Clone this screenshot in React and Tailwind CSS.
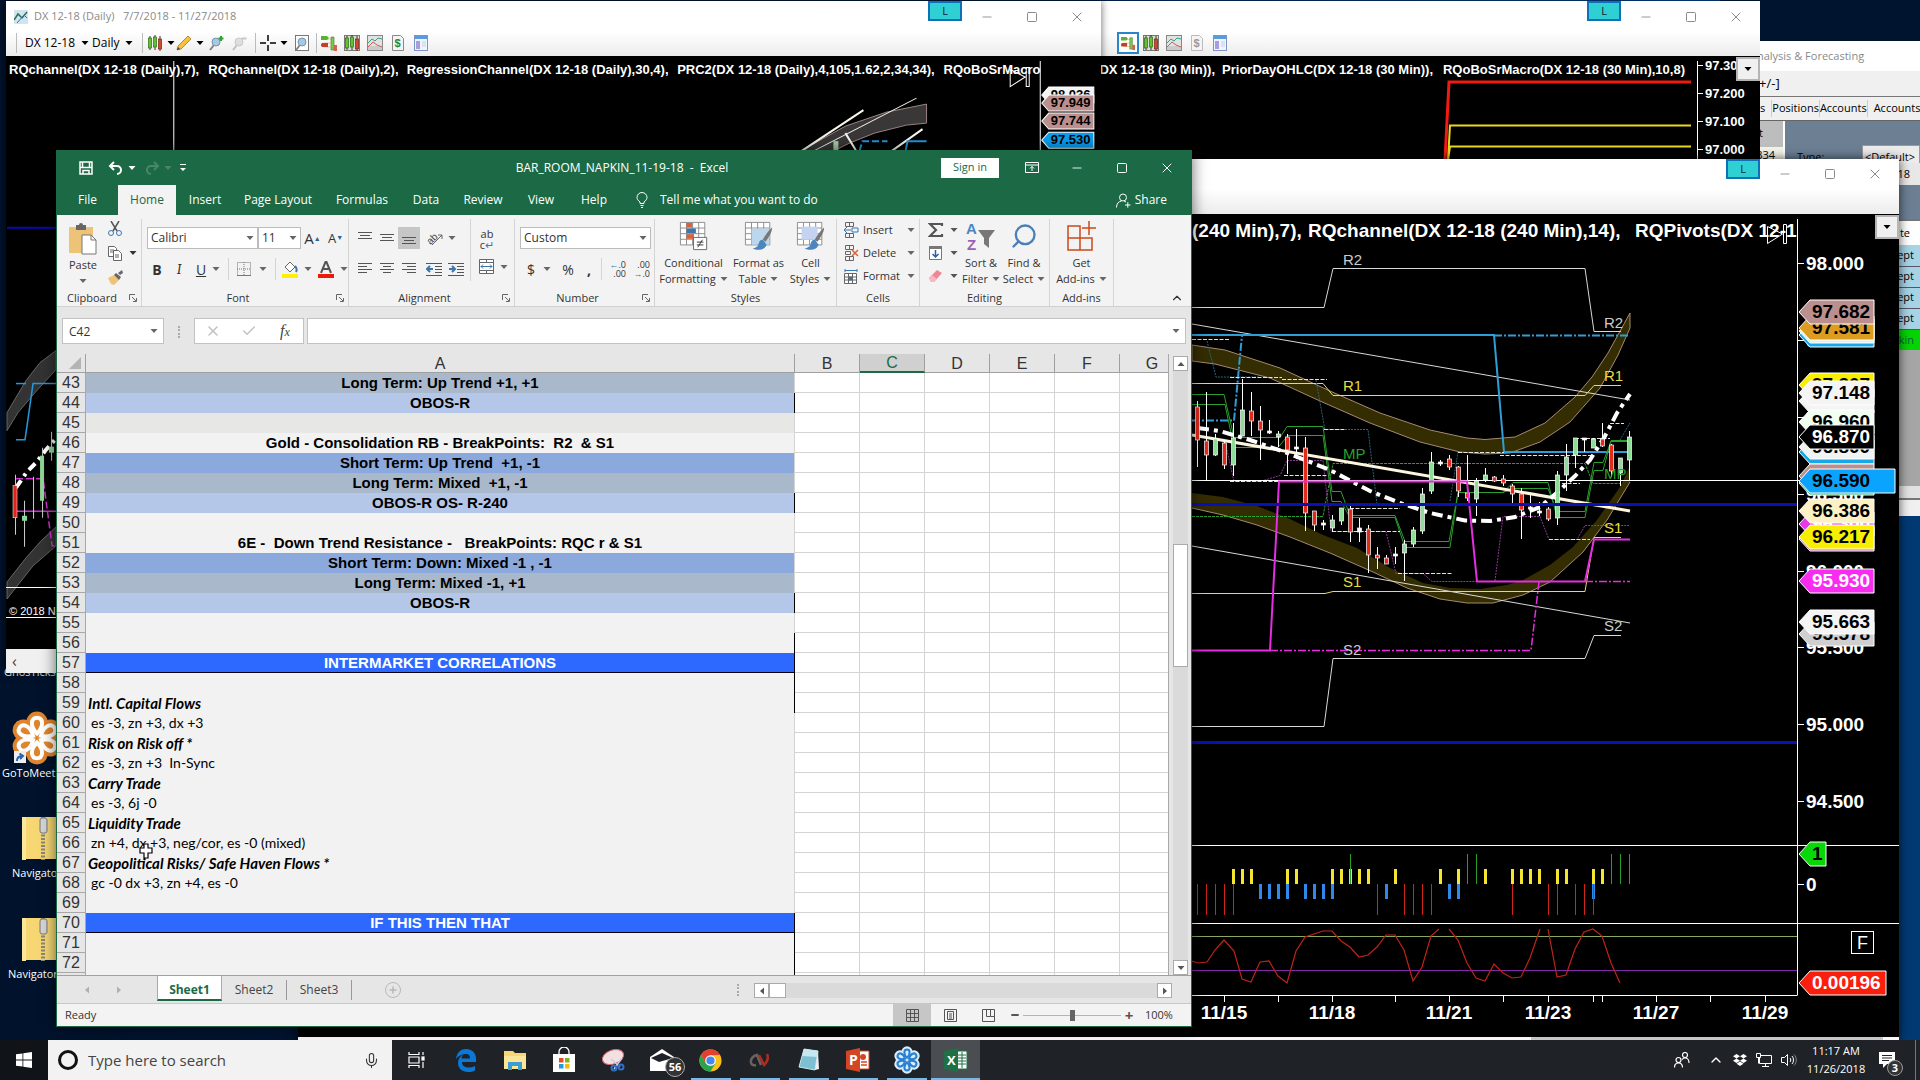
import React from "react";
import { Minus, Square, X, Mic, ChevronUp, Check, Search } from "lucide-react";
import { SiDropbox } from "react-icons/si";

const poly = (pts) => pts.map((p) => p.join(",")).join(" ");

/* ---------- shared window pieces ---------- */

function Caret({ className = "" }) {
  return (
    <svg viewBox="0 0 8 4" className={"h-1 w-2 shrink-0 " + className} fill="currentColor">
      <path d="M0.5 0h7L4 4z" />
    </svg>
  );
}

function Controls({ link }) {
  return (
    <div className="flex h-full items-center pr-0.5">
      {link && (
        <button className="mr-0.5 h-5 w-[34px] self-start border-2 border-[#0f6fb8] bg-[#2fd0d4] text-[11px] leading-4 text-[#123]">L</button>
      )}
      <button aria-label="Minimize" className="flex w-[45px] justify-center"><Minus className="size-3.5" strokeWidth={1.5} /></button>
      <button aria-label="Maximize" className="flex w-[45px] justify-center"><Square className="size-3" strokeWidth={2} /></button>
      <button aria-label="Close" className="flex w-[45px] justify-center"><X className="size-4" strokeWidth={1.5} /></button>
    </div>
  );
}

function Tag({ x = 1799, y, w = 75, h = 24, fill, text, color = "#000", size = 19, stroke = "#fff" }) {
  const n = h / 2 - 1;
  return (
    <g>
      <polygon points={poly([[x, y], [x + n, y - h / 2], [x + w, y - h / 2], [x + w, y + h / 2], [x + n, y + h / 2]])} fill={fill} stroke={stroke} strokeWidth="1" />
      <text x={x + (size > 15 ? 13 : 9)} y={y + Math.round(size * 0.33)} fontSize={size} fontWeight="700" fill={color}>{text}</text>
    </g>
  );
}

function StepEnd({ x, y }) {
  return (
    <g fill="none" stroke="#fff" strokeWidth="1" transform={`translate(${x} ${y})`}>
      <path d="M0.5 2.5v17l15-9.5zM16.5 0.5h3v19h-3z" />
    </g>
  );
}

/* ---------- chart toolbar icons ---------- */

function BoardIcon({ boxed }) {
  return (
    <svg viewBox="0 0 16 16" className={boxed ? "size-[22px] border-2 border-[#2a86c8] bg-white p-0.5" : "size-4"}>
      <path d="M3 4h10M3 8h10M3 12h10" stroke="#e5c9a0" />
      <path d="M0 1h6l2 2-2 2H0z" fill="#57b332" />
      <path d="M1 8h6v4H1l-1.500-2z" fill="#c2402a" />
      <path d="M10 2h3v13h-3z" fill="#7ec850" stroke="#3f7a22" strokeWidth=".6" />
      <path d="M13 10h3v6h-3z" fill="#d2634a" />
    </svg>
  );
}
function CandlesIcon({ framed }) {
  return (
    <svg viewBox="0 0 16 16" className="size-4 shrink-0">
      {framed && <rect x=".5" y=".5" width="15" height="15" fill="#ddd" stroke="#777" />}
      <path d="M3 1v14M8 0v15M13 1v15" stroke="#333" />
      <rect x="1.500" y="3" width="3" height="10" fill="#62c232" stroke="#2c6a12" strokeWidth=".7" />
      <rect x="6.500" y="2" width="3" height="10" fill="#62c232" stroke="#2c6a12" strokeWidth=".7" />
      <rect x="11.500" y="4" width="3" height="10" fill="#cc4a30" stroke="#7e1f10" strokeWidth=".7" />
    </svg>
  );
}
function LinesIcon() {
  return (
    <svg viewBox="0 0 16 16" className="size-4">
      <rect x=".5" y=".5" width="15" height="15" fill="#dfe3e4" stroke="#888" />
      <path d="M1 11h14v4H1z" fill="#c9cccd" />
      <path d="M1 8l4-4 3 2 3-3 4 1" fill="none" stroke="#3c9b80" />
      <path d="M1 12l5-5 4 3 5 2" fill="none" stroke="#d45b50" />
    </svg>
  );
}
function DollarIcon({ dim }) {
  return (
    <svg viewBox="0 0 16 16" className="size-4">
      <path d="M2.500.5h8l3 3v12h-11z" fill="#f4f4f4" stroke={dim ? "#bbb" : "#888"} />
      <text x="4.500" y="12" fontSize="11" fontWeight="700" fill={dim ? "#999" : "#208a30"}>$</text>
    </svg>
  );
}
function SheetIcon() {
  return (
    <svg viewBox="0 0 16 16" className="size-4">
      <rect x="1.500" y=".5" width="13" height="15" fill="#f0f4ff" stroke="#7c94c4" />
      <path d="M2 1h12v3H2z" fill="#5a9be0" />
      <path d="M3 6h4v8H3z" fill="#a99be0" />
      <path d="M9 7h4M9 9h4M9 11h4" stroke="#c8cfe0" />
    </svg>
  );
}
function LensIcon({ kind }) {
  return (
    <svg viewBox="0 0 16 16" className={"size-4 " + (kind === "minus" ? "opacity-45 grayscale" : "")}>
      {kind === "page" && <rect x="1.500" y=".5" width="13" height="15" fill="#fff" stroke="#777" />}
      <path d="M2 15l4-5" stroke="#8a7f78" strokeWidth="2" />
      <circle cx="8" cy="7" r="4" fill="#a9c7e0" stroke="#7395b4" />
      {kind === "plus" && <path d="M10.500 3.500h5M13 1v5" stroke="#2fa22f" strokeWidth="2" />}
      {kind === "minus" && <path d="M10.500 3.500h5" stroke="#888" strokeWidth="2" />}
    </svg>
  );
}

/* ---------- daily chart window ---------- */

function DailyWindow() {
  return (
    <section className="absolute left-1.5 top-px flex h-[672px] w-[1095px] flex-col bg-white text-[#8a8a8a] shadow-[0_0_8px_rgba(0,0,0,.6)]">
      <header className="flex h-[31px] items-center justify-between bg-white">
        <div className="flex items-center gap-1.5 pl-2 text-[12px]">
          <svg viewBox="0 0 14 14" className="size-3.5">
            <rect width="14" height="14" fill="#cfe6ee" />
            <path d="M0 10l4-6 4 4 5-6" fill="none" stroke="#2a6f55" strokeWidth="1.500" />
            <path d="M3 13l7-8 3 3" fill="none" stroke="#3a6fc0" />
          </svg>
          <h1 className="whitespace-pre text-[11px]">DX 12-18 (Daily)   7/7/2018 - 11/27/2018</h1>
        </div>
        <Controls link />
      </header>
      <div className="flex h-6 items-center bg-gradient-to-b from-white to-[#ececec] pb-0.5 pl-2.5 text-black">
        <span className="mr-2 h-5 border-r border-[#bbb]" />
        <button className="flex w-[67px] items-center gap-1.5 whitespace-nowrap text-[12px]">DX 12-18 <Caret className="w-1.5" /></button>
        <button className="mr-2 flex w-[42px] items-center gap-1.5 text-[12px]">Daily <Caret className="w-1.5" /></button>
        <span className="mr-1 h-5 border-r border-[#bbb]" />
        <button aria-label="Chart style" className="flex w-[29px] items-center gap-1"><CandlesIcon /><Caret className="w-1.5" /></button>
        <button aria-label="Draw" className="mr-1.5 flex w-[26px] items-center gap-1">
          <svg viewBox="0 0 16 16" className="size-4 shrink-0"><path d="M1 15l1-4L12 1l3 3L5 14z" fill="#f4c23c" stroke="#a87716" strokeWidth=".8" /><path d="M1 15l1-3 2 2z" fill="#444" /></svg>
          <Caret className="w-1.5 shrink-0" />
        </button>
        <button aria-label="Zoom in" className="w-[23px]"><LensIcon kind="plus" /></button>
        <button aria-label="Zoom out" className="w-[24px]"><LensIcon kind="minus" /></button>
        <span className="mr-1 h-5 border-r border-[#bbb]" />
        <button aria-label="Crosshair" className="mr-2 flex w-[26px] items-center gap-1">
          <svg viewBox="0 0 16 16" className="size-4 shrink-0"><path d="M8 0v6M8 10v6M0 8h6M10 8h6" stroke="#000" strokeWidth="1.500" /></svg>
          <Caret className="w-1.5 shrink-0" />
        </button>
        <button aria-label="Inspect" className="w-[22px]"><LensIcon kind="page" /></button>
        <span className="mr-1 h-5 border-r border-[#bbb]" />
        <div className="flex gap-[7px]">
          <button aria-label="Trader"><BoardIcon /></button>
          <button aria-label="Bars"><CandlesIcon framed /></button>
          <button aria-label="Indicators"><LinesIcon /></button>
          <button aria-label="Strategies"><DollarIcon /></button>
          <button aria-label="Properties"><SheetIcon /></button>
        </div>
      </div>
      <svg viewBox="6 56 1095 592" className="min-h-0 w-full flex-1 bg-black" preserveAspectRatio="xMinYMin slice">
        <g fill="#fff" fontSize="13" fontWeight="700">
          <text x="9" y="74">RQchannel(DX 12-18 (Daily),7),</text>
          <text x="208" y="74">RQchannel(DX 12-18 (Daily),2),</text>
          <text x="406" y="74">RegressionChannel(DX 12-18 (Daily),30,4),</text>
          <text x="676" y="74">PRC2(DX 12-18 (Daily),4,105,1.62,2,34,34),</text>
          <text x="942" y="74">RQoBoSrMacro</text>
        </g>
        <path d="M173.500 61v90" stroke="#fff" />
        <path d="M7 227.500h50" stroke="#0808b8" strokeWidth="2" />
        <path d="M56 350L40 362 26 380 7 412V430L18 412 35 392 56 369zM56 526L41 540 26 557 7 581V598L33 565 56 545z" fill="#333" stroke="#777" strokeWidth=".8" />
        <g fill="none" stroke="#2299dd" strokeWidth="1.500">
          <path d="M16 383h10" />
          <path d="M16 439h9l8-56h23" />
        </g>
        <path d="M16 487l11-16 10-10 9-12 10-11" fill="none" stroke="#fff" strokeWidth="4" strokeDasharray="9 5 3 5" />
        <path d="M16 478h27l9 67h4" fill="none" stroke="#d030d0" strokeWidth="1.500" strokeDasharray="7 3" />
        <path d="M16 510.500h40" stroke="#d030d0" strokeWidth="1.500" />
        <path d="M15.500 474v60M24.500 500v46M33.500 476v42M42.500 447v70M51.500 431v29" stroke="#ccc" />
        <rect x="13" y="485" width="4" height="32" fill="#e02418" stroke="#fff" strokeWidth=".5" />
        <rect x="22" y="515" width="5" height="5" fill="#8fd694" />
        <rect x="40" y="455" width="4" height="45" fill="#8fd694" />
        <rect x="49" y="446" width="5" height="6" fill="#8fd694" />
        <path d="M6 586.500h50M6 616.500h50" stroke="#fff" />
        <text x="9" y="614" fontSize="11" fill="#fff">© 2018 NinjaTrader</text>
        <path d="M799 151L844 126 885 112 925 104V123L905 125 873 133 848 143 832 151z" fill="#3a3739" stroke="#b79a9a" strokeWidth=".8" />
        <g stroke="#f8f8ea" strokeWidth="2" fill="none">
          <path d="M800 151l62-41M844 133l11 18M890 151l31-22" />
          <path d="M812 151L915 98" strokeWidth="1" />
        </g>
        <path d="M858 151l3-10h25" fill="none" stroke="#2299dd" strokeWidth="2" strokeDasharray="7 3" />
        <path d="M904 151l2-10h19" fill="none" stroke="#2299dd" strokeWidth="2" />
        <rect x="832" y="141" width="5" height="10" fill="#a9cfa9" />
        <path d="M1038.500 61v90" stroke="#fff" />
        <Tag x={1040} y={95} w={52} h={16} size={13} fill="#f4f4f4" text="98.036" />
        <Tag x={1040} y={103} w={52} h={16} size={13} fill="#bc8f8f" text="97.949" />
        <Tag x={1040} y={121} w={52} h={16} size={13} fill="#bc8f8f" text="97.744" />
        <Tag x={1040} y={140} w={52} h={16} size={13} fill="#0a9ff0" text="97.530" />
        <StepEnd x={1008} y={67} />
      </svg>
      <footer className="flex h-6 items-center bg-[#f0f0f0] pl-1.5">
        <button aria-label="Scroll left" className="text-[16px] leading-none text-[#444]">‹</button>
      </footer>
    </section>
  );
}

/* ---------- 30 minute chart window ---------- */

function HalfHourWindow() {
  return (
    <section className="absolute left-[1000px] top-px flex h-[400px] w-[760px] flex-col bg-white text-[#8a8a8a]">
      <header className="flex h-[31px] items-center justify-end"><Controls link /></header>
      <div className="flex h-6 items-center gap-[7px] bg-gradient-to-b from-white to-[#ececec] pb-0.5 pl-[117px]">
        <button aria-label="Trader" className="-mr-[3px]"><BoardIcon boxed /></button>
        <button aria-label="Bars"><CandlesIcon framed /></button>
        <button aria-label="Indicators"><LinesIcon /></button>
        <button aria-label="Strategies"><DollarIcon dim /></button>
        <button aria-label="Properties"><SheetIcon /></button>
      </div>
      <div className="relative flex flex-1 bg-black">
        <svg viewBox="1000 56 760 345" className="w-full flex-1" preserveAspectRatio="xMinYMin slice">
          <g fill="#fff" fontSize="13" fontWeight="700" textAnchor="end">
            <text x="1215" y="74">(DX 12-18 (30 Min)),</text>
            <text x="1433" y="74">PriorDayOHLC(DX 12-18 (30 Min)),</text>
            <text x="1685" y="74">RQoBoSrMacro(DX 12-18 (30 Min),10,8)</text>
          </g>
          <path d="M1445 160l4-78h242" fill="none" stroke="#f01c10" strokeWidth="3" />
          <path d="M1448 160l2-34.500h241M1448 160l2-13.500h241" fill="none" stroke="#e8d820" strokeWidth="2" />
          <path d="M1697.500 61v99M1698 65.500h5M1698 93.500h5M1698 121.500h5M1698 149.500h5" stroke="#fff" />
          <g fill="#fff" fontSize="13" fontWeight="700">
            <text x="1705" y="70">97.300</text>
            <text x="1705" y="98">97.200</text>
            <text x="1705" y="126">97.100</text>
            <text x="1705" y="154">97.000</text>
          </g>
        </svg>
        <button aria-label="Price scale" className="absolute right-0 top-px flex h-6 w-6 items-center justify-center border-2 border-[#b5b5b5] bg-[#f0f0f0] text-black"><Caret /></button>
      </div>
    </section>
  );
}

/* ---------- control center window ---------- */

function ControlCenter() {
  const rows = ["ept", "ept", "ept", "ept"];
  return (
    <section className="absolute left-[1740px] right-0 top-[41px] flex h-[475px] flex-col overflow-hidden bg-[#f0f0f0] text-[11px] text-black">
      <header className="flex h-[30px] items-center bg-white pl-2.5 whitespace-nowrap text-[#8a8a8a]">Analysis &amp; Forecasting</header>
      <div className="flex h-[26px] items-center border-b border-[#777] pl-[19px] text-[13px]">+/-]</div>
      <nav className="flex h-[23px] items-center whitespace-nowrap">
        <button className="w-10 border-r border-[#ccc] pr-1.5 text-right">tions</button>
        <button className="w-[53px] border-r border-[#ccc]">Positions</button>
        <button className="w-[57px] border-r border-[#ccc]">Accounts</button>
        <button className="pl-1.5">Accounts</button>
      </nav>
      <div className="flex h-[43px] border-t border-[#666]">
        <div className="flex w-[45px] flex-col border-r-2 border-white text-right">
          <div className="h-[26px] bg-[#bdbdbd] pr-5 leading-6">t</div>
          <div className="flex-1 bg-[#f4f4ea] pr-2 leading-4">334</div>
        </div>
        <div className="flex flex-1 items-start bg-[#6c7f93] pt-6">
          <label htmlFor="template" className="w-[77px] pl-3 pt-1">Type:</label>
          <select id="template" className="h-6 flex-1 appearance-none border border-[#999] bg-[#ececec] px-0.5"><option>&lt;Default&gt;</option></select>
        </div>
      </div>
      <div className="flex h-[22px] items-center justify-end bg-[#e8e8e8] pr-2.5">18</div>
      <div className="h-9 border-b-2 border-[#777] bg-[#6c7f93]" />
      <table className="w-full text-right">
        <thead><tr className="h-6 bg-white"><th className="pr-2.5 font-normal">te</th></tr></thead>
        <tbody>
          {rows.map((r, i) => <tr key={i} className="h-[21px] border-b border-[#556] bg-[#a6d3e6]"><td className="pr-1.5">{r}</td></tr>)}
          <tr className="h-[21px] bg-[#04d404] text-[#063]"><td className="pr-1.5">kin</td></tr>
        </tbody>
      </table>
      <div className="flex-1 bg-[#a6a6a6]" />
      <div className="h-3.5 border-b-2 border-[#777] bg-[#e2e2e2]" />
      <div className="h-4 bg-[#f0f0f0]" />
    </section>
  );
}

/* ---------- 240 minute chart window ---------- */

// x, high, low, body top, body bottom, kind
const candles = [
  [1197, 401, 467, 407, 440, "r"], [1206, 392, 481, 441, 455, "r"], [1215, 434, 456, 439, 455, "g"], [1224, 440, 469, 443, 465, "r"],
  [1233, 423, 476, 438, 465, "g"], [1242, 379, 436, 410, 436, "g"], [1251, 392, 436, 411, 421, "r"], [1260, 406, 460, 421, 430, "r"],
  [1269, 420, 434, 431, 433, "w"], [1278, 431, 447, 434, 437, "g"], [1287, 434, 474, 437, 450, "r"], [1296, 429, 459, 447, 449, "w"],
  [1305, 437, 531, 448, 513, "r"], [1314, 511, 531, 511, 525, "r"], [1323, 520, 530, 523, 525, "w"], [1332, 515, 532, 520, 528, "g"],
  [1341, 508, 525, 508, 521, "g"], [1350, 505, 542, 509, 532, "r"], [1359, 518, 542, 528, 532, "w"], [1368, 525, 573, 529, 555, "r"],
  [1377, 547, 569, 555, 558, "r"], [1386, 555, 564, 558, 564, "r"], [1395, 547, 564, 554, 556, "w"], [1404, 540, 581, 544, 553, "g"],
  [1413, 527, 547, 530, 544, "g"], [1422, 488, 534, 494, 531, "g"], [1431, 452, 494, 462, 491, "g"], [1440, 460, 466, 462, 464, "w"],
  [1449, 455, 470, 459, 467, "r"], [1458, 466, 497, 467, 491, "r"], [1467, 455, 501, 493, 498, "r"], [1476, 478, 516, 481, 499, "g"],
  [1485, 468, 482, 475, 480, "g"], [1494, 476, 482, 477, 481, "r"], [1503, 475, 486, 479, 483, "r"], [1512, 484, 503, 486, 494, "r"],
  [1521, 488, 539, 494, 510, "r"], [1530, 495, 518, 507, 509, "w"], [1539, 502, 516, 511, 513, "w"], [1548, 507, 521, 509, 519, "r"],
  [1557, 471, 525, 475, 518, "g"], [1566, 444, 491, 457, 475, "g"], [1575, 438, 468, 438, 455, "g"], [1584, 438, 452, 438, 440, "w"],
  [1593, 438, 448, 439, 448, "g"], [1602, 423, 447, 439, 446, "r"], [1611, 444, 477, 445, 471, "r"], [1620, 458, 486, 458, 473, "g"],
  [1629, 431, 480, 437, 460, "g"],
];
const bodyFill = { r: "#e42a1c", g: "#8fdc98", w: "#ffffff" };

const yellowBars = [4, 5, 6, 10, 11, 15, 16, 17, 18, 19, 22, 27, 29, 32, 35, 36, 37, 38, 40, 41, 44, 45];
const blueBars = [7, 8, 9, 10, 12, 13, 14, 15, 21, 28, 29, 44];
const redBars = [0, 1, 2, 3, 4, 20, 23, 24, 25, 26, 35, 39, 40, 42, 43, 44];
const greenBars = [17, 30, 31, 46, 47, 48];
const barX = (k) => 1197 + 9 * k;

const oscillator = [
  [[1192, 961], [1198, 963], [1207, 962], [1215, 950], [1224, 940], [1234, 951], [1242, 979], [1251, 982], [1260, 962], [1269, 961], [1278, 976], [1287, 983], [1296, 951], [1305, 937], [1314, 934], [1323, 931], [1332, 931], [1341, 941], [1350, 947], [1359, 957], [1368, 955], [1377, 947], [1386, 935], [1395, 935], [1404, 950], [1413, 981], [1422, 967], [1431, 936], [1439, 929]],
  [[1449, 929], [1458, 940], [1467, 963], [1476, 978], [1485, 981], [1494, 964], [1503, 973], [1512, 978], [1521, 977], [1530, 958], [1540, 929]],
  [[1548, 929], [1557, 977], [1566, 975], [1575, 949], [1584, 932], [1593, 929], [1602, 936], [1611, 963], [1620, 983]],
];

const axis = [["98.000", 263], ["97.500", 340], ["97.000", 417], ["96.500", 494], ["96.000", 571], ["95.500", 647], ["95.000", 724], ["94.500", 801]];
const dates = [["11/15", 1224], ["11/18", 1332], ["11/21", 1449], ["11/23", 1548], ["11/27", 1656], ["11/29", 1765]];
const dateTicks = [1224, 1278, 1332, 1395, 1449, 1503, 1548, 1593, 1602, 1656, 1710, 1765];

function FourHourWindow() {
  return (
    <section className="absolute bottom-0 left-[298px] top-[159px] flex w-[1601px] flex-col bg-white text-[#8a8a8a] shadow-[0_0_10px_rgba(0,0,0,.7)]">
      <header className="flex h-[30px] items-center justify-end"><Controls link /></header>
      <div className="h-[25px] bg-gradient-to-b from-white to-[#ececec]" />
      <div className="relative flex min-h-0 flex-1 justify-end overflow-hidden bg-black">
        <svg viewBox="1192 214 707 823" width="707" height="823" className="shrink-0">
          <g fill="#fff" fontSize="19" fontWeight="700">
            <text x="1192" y="237">(240 Min),7),</text>
            <text x="1308" y="237">RQchannel(DX 12-18 (240 Min),14),</text>
            <text x="1635" y="237">RQPivots(DX 12-1</text>
          </g>
          <StepEnd x={1767} y={224} />
          <g fill="#342d02" stroke="#a58a70" strokeWidth="1">
            <path d="M1192 345L1225 350 1280 368 1330 391 1380 413 1430 430 1467 438 1485 439.500 1515 437 1545 423 1575 397 1592 377 1608 353 1630 313V328L1618 355 1600 388 1570 422 1540 442 1510 453 1485 454 1460 452 1420 442 1370 423 1320 401 1270 378 1215 364 1192 361z" />
            <path stroke="none" d="M1192 493L1223 497 1257 506 1290 519 1323 535 1357 548 1390 568 1423 583 1450 588 1480 589 1507 585 1523 580 1550 565 1573 547 1597 520 1620 487 1630 466V482L1607 520 1583 552 1550 582 1523 595 1493 603 1467 603 1440 599 1407 588 1373 572 1330 553 1290 537 1257 525 1223 515 1192 508z" />
            <path fill="none" d="M1192 508L1223 515 1257 525 1290 537 1330 553 1373 572 1407 588 1440 599 1467 603 1493 603 1523 595 1550 582 1583 552 1607 520 1630 482" />
          </g>
          <g fill="none" stroke="#d8d8d8">
            <path d="M1192 307.500H1324L1333 268.500H1585L1594 331.500H1621" />
            <path d="M1192 726.500H1324L1333 658.500H1585L1594 635.500H1621" />
            <path d="M1192 324L1630 400M1192 546L1630 623" />
          </g>
          <g fill="none" stroke="#e8dc60">
            <path d="M1192 383.500H1323L1333 395.500H1585L1594 385.500H1621" />
            <path d="M1192 593.500H1325L1333 591.500H1585L1594 537.500H1621" />
          </g>
          <g fill="none" stroke="#2f9ed8" strokeWidth="2">
            <path d="M1192 335H1494L1504 452H1630" />
            <path d="M1494 335.500H1630M1192 420.500H1234L1242 335" strokeDasharray="8 2 2 2" />
          </g>
          <g fill="none" stroke="#2a6478" strokeDasharray="2 1">
            <path d="M1207 341L1216 377H1260M1316 380L1325 430M1324 429.500H1368L1377 504M1450 501L1458 452M1620 440L1630 423" />
          </g>
          <g fill="none" stroke="#2aa02e">
            <path d="M1192 394.500H1224L1234 437.500H1280L1287 426.500H1323L1332 491.500H1341L1350 515.500H1395L1405 541.500H1449L1458 492.500H1503L1513 482.500H1548L1557 517.500H1585L1594 470.500H1603L1611 440.500H1630" />
            <path d="M1192 404.500H1225L1234 447.500H1278L1288 435.500H1323L1332 501.500H1341L1350 517.500H1395L1405 547.500H1450L1458 492.500H1503L1513 488.500H1548L1557 511.500H1585L1594 462.500H1603L1611 441.500H1630" />
            <path d="M1192 516.500H1323L1333 463.500H1585L1593 483.500H1621" strokeDasharray="3 1" />
          </g>
          <g fill="none" stroke="#8c3a94" strokeDasharray="2 1">
            <path d="M1225 441L1234 481.500H1260L1280 475.500L1287 460.500H1323L1331 531.500H1386L1396 573.500H1423L1432 581.500H1480" />
            <path d="M1495 581L1503 516.500H1540L1549 539.500H1577L1585 525.500H1630" />
          </g>
          <path d="M1192 339.500H1230M1230 377.500H1282M1282 379.500H1327M1284 475.500H1328M1230 481.500H1280M1350 508.500H1400M1332 531.500H1400M1398 573.500H1453M1324 429.500H1345M1458 452.500H1504M1500 455.500H1594M1610 423.500H1624M1549 539.500H1590M1562 483.500H1580M1575 438.500H1610" fill="none" stroke="#e4e4e4" strokeDasharray="4 1.500" />
          <path d="M1192 435L1630 511" stroke="#fdf6dc" strokeWidth="3" />
          <path d="M1198 428L1220 431 1250 440 1290 454 1330 470 1370 491 1400 503 1430 513 1465 520.500 1490 521 1515 517 1540 507 1560 490 1575 476 1590 460 1605 436 1617 413 1630 394" fill="none" stroke="#fff" strokeWidth="4" strokeDasharray="11 5 4 5" />
          <path d="M1192 480.500H1800" stroke="#fff" />
          {candles.map(([x, hi, lo, t, b, k]) => (
            <g key={x}>
              <path d={`M${x + 0.5} ${hi}V${lo}`} stroke="#fff" />
              <rect x={x - 1.5} y={t} width="4" height={b - t} fill={bodyFill[k]} stroke="#fff" strokeWidth=".7" />
            </g>
          ))}
          <g fill="none" stroke="#e62ee0" strokeWidth="2">
            <path d="M1192 650.500H1270L1279 481.500H1467L1477 581.500H1585L1594 539.500H1630" />
            <path d="M1270 650.500H1531L1539 581.500M1585 581.500H1630" strokeDasharray="8 2 2 2" strokeWidth="1.500" />
          </g>
          <path d="M1192 504.500H1797M1192 742.500H1797" stroke="#0a10b8" strokeWidth="3" />
          <g fontSize="15">
            <g fill="#ccc"><text x="1343" y="265">R2</text><text x="1604" y="328">R2</text><text x="1343" y="655">S2</text><text x="1604" y="631">S2</text></g>
            <g fill="#e8dc40"><text x="1343" y="391">R1</text><text x="1604" y="381">R1</text><text x="1343" y="587">S1</text><text x="1604" y="533">S1</text></g>
            <g fill="#2aa02e"><text x="1343" y="459">MP</text><text x="1604" y="479">MP</text></g>
          </g>

          {yellowBars.map((k) => <rect key={"y" + k} x={barX(k) - 1} y="869" width="3" height="15" fill="#f4e62c" />)}
          {blueBars.map((k) => <rect key={"b" + k} x={barX(k) - 1} y="884" width="3" height="15" fill="#3088e8" />)}
          {redBars.map((k) => <rect key={"r" + k} x={barX(k)} y="884" width="1" height="31" fill="#d02416" />)}
          {greenBars.map((k) => <rect key={"g" + k} x={barX(k)} y="854" width="1" height="30" fill="#28a028" />)}
          <path d="M1192 936.500H1797" stroke="#8aa860" />
          <path d="M1192 970.500H1797" stroke="#8028a8" />
          {oscillator.map((p, i) => <polyline key={i} points={poly(p)} fill="none" stroke="#c02418" strokeWidth="1.200" />)}

          <path d="M1797.500 219V995.500M1192 845.500H1899M1192 923.500H1899M1192 995.500H1797M1798 884.500H1804" fill="none" stroke="#fff" />
          {dateTicks.map((x) => <path key={x} d={`M${x + 0.5} 996V1002`} stroke="#fff" />)}
          <g fill="#fff" fontSize="19" fontWeight="700">
            {dates.map(([d, x]) => <text key={d} x={x} y="1019" textAnchor="middle">{d}</text>)}
            {axis.map(([t, y]) => <text key={t} x="1806" y={y + 7}>{t}</text>)}
            <text x="1806" y="891">0</text>
          </g>
          {axis.map(([t, y]) => <path key={t} d={`M1798 ${y + 0.5}H1804`} stroke="#fff" />)}

          <Tag y={335} fill="#18a8e8" text="" />
          <Tag y={331} fill="#dff2ea" text="" />
          <Tag y={328} fill="#dc9c20" text="97.581" />
          <Tag y={312} fill="#bc8f8f" text="97.682" />
          <Tag y={385} fill="#f8ee00" text="97.207" />
          <Tag y={401} fill="#f4f4f4" text="" />
          <Tag y={393} fill="#f4f4f4" text="97.148" />
          <Tag y={422} fill="#f0fff0" text="96.960" />
          <Tag y={452} fill="#18a8e8" text="" />
          <Tag y={447} fill="#f0f4f4" text="96.800" />
          <Tag y={437} fill="#000" text="96.870" color="#fff" />
          <Tag y={476} fill="#bc8f8f" text="96.644" />
          <Tag y={483} fill="#30b060" text="" />
          <Tag y={481} w={96} fill="#0aa4ff" text="96.590" />
          <Tag y={524} fill="#e838e8" text="96.300" color="#fff" />
          <Tag y={511} fill="#fcf0c4" text="96.386" />
          <Tag y={539} fill="#c860b8" text="" />
          <Tag y={537} fill="#f8ee00" text="96.217" />
          <Tag y={581} fill="#f82cf0" text="95.930" color="#fff" />
          <Tag y={634} fill="#cfcfcf" text="95.578" />
          <Tag y={622} fill="#f4f4f4" text="95.663" />
          <Tag y={854} w={27} fill="#08d808" text="1" />
          <Tag y={983} w={87} fill="#fa1e0c" text="0.00196" color="#fff" />
          <rect x="1851.500" y="931.500" width="22" height="22" fill="#000" stroke="#fff" />
          <text x="1862.500" y="949" fontSize="18" fill="#fff" textAnchor="middle">F</text>
        </svg>
        <button aria-label="Price scale" className="absolute right-0 top-px flex h-6 w-6 items-center justify-center border-2 border-[#b5b5b5] bg-[#f0f0f0] text-black"><Caret /></button>
      </div>
      <footer className="flex h-[3px] justify-end bg-[#fbf5f7] pr-4"><span className="h-full w-[352px] bg-[#c6c6c6]" /></footer>
    </section>
  );
}

/* ---------- Excel ---------- */

const menu = [["File", "w-[61px]"], ["Home", "w-[58px]"], ["Insert", "w-[58px]"], ["Page Layout", "w-[88px]"], ["Formulas", "w-[80px]"], ["Data", "w-[48px]"], ["Review", "w-[66px]"], ["View", "w-[50px]"], ["Help", "w-[56px]"]];

function ExcelTop() {
  return (
    <div className="bg-[#1b6a45] text-white">
      <div className="grid h-[35px] grid-cols-[1fr_auto_1fr] items-center">
        <div className="flex items-center pl-[22px]">
          <button aria-label="Save" className="w-[29px]">
            <svg viewBox="0 0 14 14" className="size-3.5" fill="none" stroke="currentColor" strokeWidth="1.500"><path d="M1 1h12v12H1zM1 6.500h12M4 13V9.500h6V13M3.500 1v5M10.500 1v5" /></svg>
          </button>
          <button aria-label="Undo" className="flex w-9 items-center gap-1">
            <svg viewBox="0 0 16 14" className="h-3.5 w-4" fill="none" stroke="currentColor" strokeWidth="2"><path d="M6 1L2 5l4 4M2 5h7a4 4 0 0 1 0 8" /></svg><Caret className="w-1.5" />
          </button>
          <button aria-label="Redo" className="flex w-9 items-center gap-1 text-[#4a8768]">
            <svg viewBox="0 0 16 14" className="h-3.5 w-4" fill="none" stroke="currentColor" strokeWidth="2"><path d="M10 1l4 4-4 4M14 5H7a4 4 0 0 0 0 8" /></svg><Caret className="w-1.5" />
          </button>
          <button aria-label="Customize toolbar"><svg viewBox="0 0 6 8" className="h-2 w-1.5" fill="currentColor"><path d="M0 0h6v1H0zM0 4h6L3 7z" /></svg></button>
        </div>
        <h2 className="whitespace-pre pr-1 text-[12px]">BAR_ROOM_NAPKIN_11-19-18  -  Excel</h2>
        <div className="flex h-full items-center justify-end">
          <button className="mr-2.5 h-5 w-[58px] bg-white text-[11px] text-[#1b6a45]">Sign in</button>
          <button aria-label="Ribbon display options" className="flex w-[45px] justify-center">
            <svg viewBox="0 0 14 11" className="h-[11px] w-3.5" fill="none" stroke="currentColor"><path d="M.5.5h13v10H.5zM.5 3h13M7 9V4.500M5 6.500l2-2 2 2" /></svg>
          </button>
          <Controls />
        </div>
      </div>
      <div className="flex h-[30px] items-stretch text-[12px]">
        {menu.map(([m, w]) => (
          <button key={m} className={w + (m === "Home" ? " bg-[#f3f3f3] text-[#1b6a45]" : "")}>{m}</button>
        ))}
        <label className="ml-3.5 flex flex-1 items-center gap-3">
          <svg viewBox="0 0 12 16" className="h-4 w-3" fill="none" stroke="currentColor"><path d="M4 11.500V10C2 8.500 1 7 1 5.500a5 5 0 0 1 10 0C11 7 10 8.500 8 10v1.500zM4.500 13.500h3M5 15.500h2" /></svg>
          <span className="sr-only">Tell me</span>
          <input className="w-60 bg-transparent outline-none placeholder:text-white" placeholder="Tell me what you want to do" />
        </label>
        <button className="mr-6 flex items-center gap-1">
          <svg viewBox="0 0 15 15" className="size-[15px]" fill="none" stroke="currentColor"><circle cx="7" cy="4.500" r="3.500" /><path d="M.5 14.500c0-4 2-6 5-6.500M9 12h5.500M11.800 9.200v5.500M8 8l2 1" /></svg>
          Share
        </button>
      </div>
    </div>
  );
}

function Group({ label, w, children, launcher }) {
  return (
    <div className={"mt-1 flex flex-col border-r border-[#d4d4d4] " + w}>
      <div className="flex-1">{children}</div>
      <div className="relative flex h-4 items-center justify-center text-[11px] text-[#333]">
        <span className={launcher ? "pr-3.5" : ""}>{label}</span>
        {launcher && (
          <button aria-label={label + " settings"} className="absolute right-1">
            <svg viewBox="0 0 8 8" className="size-2" fill="none" stroke="#666"><path d="M.5 6V.5H6M3 3l4 4M7.500 4v3.500H4" /></svg>
          </button>
        )}
      </div>
    </div>
  );
}

function Combo({ id, value, w }) {
  return (
    <span className={"relative flex items-center " + w}>
      <select id={id} aria-label={id} className="h-[22px] w-full appearance-none border border-[#bcbcbc] bg-white pl-[3px] text-[12px] leading-4 text-[#333]"><option>{value}</option></select>
      <Caret className="absolute right-1 w-1.5 text-[#666]" />
    </span>
  );
}

function Lines({ rows, className = "" }) {
  return (
    <svg viewBox="0 0 14 14" className={"size-3.5 " + className} stroke="#555">
      {rows.map(([x1, x2, y], i) => <path key={i} d={`M${x1} ${y}H${x2}`} />)}
    </svg>
  );
}

function BigButton({ w, icon, a, b }) {
  return (
    <button className={"flex flex-col items-center text-[11px] leading-4 whitespace-nowrap " + w}>
      <span className="mb-0.5 flex h-[34px] items-center">{icon}</span>
      <span>{a}</span>
      <span className="flex items-center gap-1">{b}<Caret className="w-1.5 text-[#666]" /></span>
    </button>
  );
}

const GridGlyph = ({ fills, children }) => (
  <svg viewBox="0 0 32 32" className="size-[30px]" fill="none">
    <path d="M1.500 1.500h26v24h-26zM1.500 7.500h26M1.500 13.500h26M1.500 19.500h26M8 1.500v24M14.500 1.500v24M21 1.500v24" stroke="#8a8a8a" fill="#fff" />
    {fills.map(([x, y, w, h, c], i) => <rect key={i} x={x} y={y} width={w} height={h} fill={c} />)}
    {children}
  </svg>
);
const BrushGlyph = () => (
  <>
    <path d="M30 7c-3 2-8 9-10 13l3 2c3-4 7-10 7-15z" fill="#777" />
    <path d="M20 20c-4 0-4 4-5 6s-4 3-6 3c5 3 14 2 15-4z" fill="#4a86c0" />
  </>
);

const CellGlyph = ({ kind }) => (
  <svg viewBox="0 0 16 16" className="size-4" fill="none" stroke="#666">
    <path d="M2.500.5h8v4h-8zM6.500.5v4M2.500 11.500h8v4h-8zM6.500 11.500v4" />
    {kind === "Insert" && <path d="M8 8H1M4 5L1 8l3 3M9 6h6v4H9z" stroke="#3a76b0" />}
    {kind === "Delete" && <><path d="M2.500 6.500h5v3h-5z" /><path d="M9 5l6 6M15 5l-6 6" stroke="#d8623a" strokeWidth="1.500" /></>}
    {kind === "Format" && <><path d="M0 0h16v5H0z" fill="#f3f3f3" stroke="none" /><path d="M2 2.500h12M2 1v3M14 1v3" stroke="#3a76b0" /><path d="M1.500 5.500h12v10h-12zM5.500 5.500v10M9.500 5.500v10M1.500 9h12M1.500 12h12" fill="#fff" /><path d="M5.500 9h4v3h-4z" fill="#3a76b0" /></>}
  </svg>
);

const Sep = () => <span className="h-[22px] border-r border-[#d4d4d4]" />;

function Ribbon() {
  return (
    <div className="flex h-[92px] border-b border-[#d0d0d0] bg-[#f3f3f3] text-[#333]">
      <Group label="Clipboard" w="w-[85px]" launcher>
        <div className="flex pl-2">
          <button className="flex w-9 flex-col items-center text-[11px] leading-4">
            <svg viewBox="0 0 30 32" className="mb-0.5 mt-1 h-8 w-[30px]">
              <path d="M1 4h24v26H1z" fill="#edc477" /><path d="M8 2h3a2 2 0 0 1 4 0h3v5H8z" fill="#666" />
              <path d="M14 12h9l5 5v14H14z" fill="#fff" stroke="#777" /><path d="M23 12v5h5" fill="none" stroke="#777" />
            </svg>
            Paste
            <Caret className="mt-1.5 w-1.5 text-[#666]" />
          </button>
          <div className="ml-1.5 flex flex-col gap-2 pt-0.5">
            <button aria-label="Cut"><svg viewBox="0 0 16 16" className="size-4" fill="none"><path d="M4 0l6 10M12 0L6 10" stroke="#555" strokeWidth="1.500" /><circle cx="4" cy="12" r="2.500" stroke="#3a76b0" /><circle cx="12" cy="12" r="2.500" stroke="#3a76b0" /></svg></button>
            <button aria-label="Copy" className="flex items-center gap-1.5"><svg viewBox="0 0 16 16" className="size-4" fill="#fff" stroke="#666"><path d="M1.500 1.500h6l2 2v8h-8zM3 5h4M3 7h4" /><path d="M6.500 5.500h5l3 3v7h-8zM8 10h4M8 12h4" /></svg><Caret className="w-1.5" /></button>
            <button aria-label="Format Painter"><svg viewBox="0 0 16 16" className="size-4"><path d="M1 9l6-3 5 5-5 5-3-1z" fill="#edc477" /><path d="M7 6l2-2 5 4-2 3zM11 4l4-3 1 3-3 2z" fill="#666" /></svg></button>
          </div>
        </div>
      </Group>
      <Group label="Font" w="w-[207px]" launcher>
        <div className="flex items-center pl-[5px] pt-2">
          <Combo id="Font" value="Calibri" w="w-[111px]" /><Combo id="Size" value="11" w="w-[43px]" />
          <button aria-label="Increase font size" className="w-[23px] text-[15px] leading-5">A<sup className="text-[7px] text-[#2a62a0]">▲</sup></button>
          <button aria-label="Decrease font size" className="w-[23px] text-[13px] leading-5">A<sup className="text-[7px] text-[#2a62a0]">▼</sup></button>
        </div>
        <div className="mt-2 flex h-6 items-center pl-1 text-[14px]">
          <button className="w-[22px] font-bold">B</button>
          <button className="w-[22px] font-serif italic">I</button>
          <button className="w-[22px] underline">U</button>
          <Caret className="mr-2 w-1.5 text-[#666]" /><Sep />
          <button aria-label="Borders" className="ml-2 mr-2"><svg viewBox="0 0 14 14" className="size-3.5" fill="none" stroke="#777" strokeDasharray="1 1"><path d="M.5.5h13v13H.5zM7 0v14M0 7h14" /><path d="M0 13.500h14" strokeDasharray="none" /></svg></button>
          <Caret className="mr-2 w-1.5 text-[#666]" /><Sep />
          <button aria-label="Fill colour" className="mx-1.5"><svg viewBox="0 0 16 18" className="h-[18px] w-4"><path d="M3 7l5-5 5 5-5 5z" fill="#fff" stroke="#666" /><path d="M13 6c2 2 2 4 1 6" stroke="#3a76b0" strokeWidth="2" fill="none" /><path d="M0 14h16v4H0z" fill="#fff000" /></svg></button>
          <Caret className="w-1.5 text-[#666]" />
          <button aria-label="Font colour" className="mx-1.5"><svg viewBox="0 0 16 18" className="h-[18px] w-4"><path d="M3 13L7.500 2h1L13 13M5 9h6" stroke="#555" strokeWidth="2" fill="none" /><path d="M0 14h16v4H0z" fill="#f01808" /></svg></button>
          <Caret className="w-1.5 text-[#666]" />
        </div>
      </Group>
      <Group label="Alignment" w="w-[166px]" launcher>
        <div className="flex">
          <div className="flex w-[122px] flex-col border-r border-[#d4d4d4]">
            <div className="flex items-center pl-[5px] pt-2">
              <button aria-label="Top align" className="flex h-[22px] w-[22px] items-center justify-center"><Lines rows={[[0, 14, 1.5], [2, 12, 4.5], [0, 14, 7.5]]} /></button>
              <button aria-label="Middle align" className="flex h-[22px] w-[22px] items-center justify-center"><Lines rows={[[0, 14, 3.5], [2, 12, 6.5], [0, 14, 9.5]]} /></button>
              <button aria-label="Bottom align" className="flex h-[22px] w-[22px] items-center justify-center bg-[#c6c6c6]"><Lines rows={[[0, 14, 6.5], [2, 12, 9.5], [0, 14, 12.5]]} /></button>
              <button aria-label="Orientation" className="ml-1.5 flex w-8 items-center gap-1"><svg viewBox="0 0 18 16" className="h-4 w-[18px]"><text x="0" y="12" fontSize="10" fill="#444" transform="rotate(-45 6 8)">ab</text><path d="M6 15L16 5M12 5h4v4" stroke="#666" fill="none" /></svg><Caret className="w-1.5 text-[#666]" /></button>
            </div>
            <div className="mt-2 flex h-6 items-center pl-[5px]">
              <button aria-label="Align left" className="flex w-[22px] justify-center"><Lines rows={[[0, 14, 1.5], [0, 9, 4.5], [0, 14, 7.5], [0, 9, 10.5]]} /></button>
              <button aria-label="Centre" className="flex w-[22px] justify-center"><Lines rows={[[0, 14, 1.5], [3, 11, 4.5], [0, 14, 7.5], [3, 11, 10.5]]} /></button>
              <button aria-label="Align right" className="flex w-[22px] justify-center"><Lines rows={[[0, 14, 1.5], [5, 14, 4.5], [0, 14, 7.5], [5, 14, 10.5]]} /></button>
              {[["Decrease indent", "M7 7H1M4 4L1 7l3 3"], ["Increase indent", "M1 7h6M4 4l3 3-3 3"]].map(([l, d]) => (
                <button key={l} aria-label={l} className="ml-1.5"><svg viewBox="0 0 16 14" className="h-3.5 w-4" fill="none" stroke="#555"><path d="M0 1.500h16M9 4.500h7M9 7.500h7M9 10.500h7M0 13.500h16" /><path d={d} stroke="#3a76b0" strokeWidth="2" /></svg></button>
              ))}
            </div>
          </div>
          <div className="flex flex-col pl-2 pt-1.5">
            <button aria-label="Wrap text" className="h-7 w-4 text-[11px] leading-[11px]">ab c<span className="text-[#3a76b0]">↵</span></button>
            <button aria-label="Merge" className="mt-1.5 flex items-center gap-1.5"><svg viewBox="0 0 15 15" className="size-[15px]" fill="#fff" stroke="#666"><path d="M.5.5h14v14H.5zM.5 3.500h14M.5 11.500h14M7.500 .5v3M7.500 11.500v3" /><path d="M2 7.500h11M4 5.500l-2 2 2 2M11 5.500l2 2-2 2" stroke="#3a76b0" fill="none" /></svg><Caret className="w-1.5 text-[#666]" /></button>
          </div>
        </div>
      </Group>
      <Group label="Number" w="w-[140px]" launcher>
        <div className="flex pl-[5px] pt-2"><Combo id="Number format" value="Custom" w="w-[131px]" /></div>
        <div className="mt-2 flex h-6 items-center pl-1 text-[14px]">
          <button className="w-6">$</button><Caret className="mr-2 w-1.5 text-[#666]" />
          <button className="w-[18px]">%</button><button className="w-6 font-bold">,</button><Sep />
          <button aria-label="Increase decimal" className="w-6 text-right text-[9px] leading-[9px]"><span className="text-[#3a76b0]">←</span>.0<br />.00</button>
          <button aria-label="Decrease decimal" className="w-6 text-right text-[9px] leading-[9px]">.00<br /><span className="text-[#3a76b0]">→</span>.0</button>
        </div>
      </Group>
      <Group label="Styles" w="w-[182px]">
        <div className="flex justify-center">
          <BigButton w="w-[72px]" a="Conditional" b="Formatting" icon={<GridGlyph fills={[[8, 2, 6, 5, "#d8623a"], [8, 8, 10, 5, "#3a76b0"], [8, 14, 8, 5, "#d8623a"]]}><path d="M15.500 17.500h14v13h-14z" fill="#fff" stroke="#666" /><path d="M19 22.500h7M19 25.500h7M25 20l-5 8" stroke="#333" /></GridGlyph>} />
          <BigButton w="w-[58px]" a="Format as" b="Table" icon={<GridGlyph fills={[[8, 8, 19, 17, "#bcd6ee"]]}><BrushGlyph /></GridGlyph>} />
          <BigButton w="w-[46px]" a="Cell" b="Styles" icon={<GridGlyph fills={[[6, 6, 17, 14, "#c4d4f0"]]}><BrushGlyph /></GridGlyph>} />
        </div>
      </Group>
      <Group label="Cells" w="w-[83px]">
        <div className="flex flex-col gap-[7px] pl-1.5 pt-[3px] text-[11px] leading-4">
          {["Insert", "Delete", "Format"].map((k) => (
            <button key={k} className="flex items-center gap-1"><CellGlyph kind={k} /><span className="w-9 text-left">{k}</span><Caret className="ml-1 w-1.5 text-[#666]" /></button>
          ))}
        </div>
      </Group>
      <Group label="Editing" w="w-[130px]">
        <div className="flex">
          <div className="flex w-9 flex-col gap-[7px] pl-2 pt-[3px] text-[#555]">
            <button aria-label="Sum" className="flex items-center gap-1.5"><svg viewBox="0 0 16 16" className="size-4 shrink-0" fill="none" stroke="currentColor" strokeWidth="2.200"><path d="M14 4V2H2l6 6-6 6h12v-2" /></svg><Caret className="w-1.5 shrink-0" /></button>
            <button aria-label="Fill" className="flex items-center gap-1.5"><svg viewBox="0 0 16 16" className="size-4 shrink-0" fill="#fff" stroke="#777"><path d="M1.500 1.500h12v13h-12z" /><path d="M1.500 1.500h12v2h-12z" fill="#777" /><path d="M7.500 5v7M4.500 9l3 3 3-3" stroke="#2a62a0" strokeWidth="1.500" fill="none" /></svg><Caret className="w-1.5 shrink-0" /></button>
            <button aria-label="Clear" className="flex items-center gap-1.5"><svg viewBox="0 0 16 16" className="size-4 shrink-0"><path d="M1 10l8-8 5 3-8 9H3z" fill="#ee8696" /><path d="M1 10l3-3 5 4-3 3H3z" fill="#f8b8c0" /></svg><Caret className="w-1.5 shrink-0" /></button>
          </div>
          <BigButton w="ml-1 w-[42px]" a="Sort &" b="Filter" icon={<svg viewBox="0 0 30 32" className="h-8 w-[30px]"><text x="0" y="14" fontSize="15" fontWeight="700" fill="#4a86c0">A</text><text x="1" y="30" fontSize="15" fontWeight="700" fill="#9a60b4">Z</text><path d="M12 10h17l-6 8v10l-5-4v-6z" fill="#777" /></svg>} />
          <BigButton w="w-[44px]" a="Find &" b="Select" icon={<Search className="size-7 -scale-x-100 text-[#4a7fb8]" strokeWidth={2} />} />
        </div>
      </Group>
      <Group label="Add-ins" w="w-[64px]">
        <div className="flex justify-center">
          <BigButton w="w-[60px]" a="Get" b="Add-ins" icon={<svg viewBox="0 0 30 32" className="h-8 w-[30px]" fill="none" stroke="#cc4a1c" strokeWidth="1.500"><path d="M1 6h12v12H1zM1 18h12v12H1zM13 18h12v12H13zM22 1v14M15 8h14" /></svg>} />
        </div>
      </Group>
      <button aria-label="Collapse ribbon" className="ml-auto mr-[7px] self-end pb-px"><ChevronUp className="size-3.5" /></button>
    </div>
  );
}

const B = "bg-[#a9b8cb] text-center font-bold";
const L = "bg-[#b4c7e9] text-center font-bold";
const S = "bg-[#8ca9dd] text-center font-bold";
const P = "bg-[#f2f2f2] text-center font-bold";
const H = "bg-[#2d69ff] text-center font-bold text-white border-b border-b-[#001]";
const N = "bg-[#f2f2f2]";
const C = "bg-[#f2f2f2] pl-[5px] font-['Lato',sans-serif] text-[14px]";
const CI = "bg-[#f2f2f2] pl-0.5 font-['Lato',sans-serif] text-[15px] font-bold italic";
const sheet = [
  [43, B, "Long Term: Up Trend +1, +1"], [44, L, "OBOS-R", 1], [45, "bg-[#e7e7e6]", ""],
  [46, P, "Gold - Consolidation RB - BreakPoints:  R2  & S1"], [47, S, "Short Term: Up Trend  +1, -1"],
  [48, B, "Long Term: Mixed  +1, -1"], [49, L, "OBOS-R OS- R-240", 1], [50, N, ""],
  [51, P, "6E -  Down Trend Resistance -   BreakPoints: RQC r & S1"], [52, S, "Short Term: Down: Mixed -1 , -1"],
  [53, B, "Long Term: Mixed -1, +1"], [54, L, "OBOS-R", 1], [55, N, ""], [56, N, "", 1],
  [57, H, "INTERMARKET CORRELATIONS", 1], [58, N, "", 1], [59, CI, "Intl. Capital Flows", 1], [60, C, "es -3, zn +3, dx +3"],
  [61, CI, "Risk on Risk off *"], [62, C, "es -3, zn +3  In-Sync"], [63, CI, "Carry Trade"], [64, C, "es -3, 6j -0"],
  [65, CI, "Liquidity Trade"], [66, C, "zn +4, dx +3, neg/cor, es -0 (mixed)"], [67, CI, "Geopolitical Risks/ Safe Haven Flows *"],
  [68, C, "gc -0 dx +3, zn +4, es -0"], [69, N, ""], [70, H, "IF THIS THEN THAT", 1], [71, N, "", 1], [72, N, "", 1], [73, N, "", 1],
];
const cols = ["B", "C", "D", "E", "F", "G"];

function Sheet() {
  return (
    <div className="flex min-h-0 flex-1 border-b border-[#a0a0a0] bg-[#e6e6e6]">
      <div className="w-[1112px] overflow-hidden border-r border-[#a8a8a8]">
        <table className="w-[1128px] table-fixed border-separate border-spacing-0 font-['Liberation_Sans',sans-serif] text-[15px] leading-[18px] text-black">
          <colgroup>
            <col className="w-[29px]" /><col className="w-[709px]" />
            {cols.map((c) => <col key={c} className="w-[65px]" />)}
          </colgroup>
          <thead>
            <tr className="h-[19px] bg-[#e6e6e6] text-[16px] leading-[17px] text-[#333]">
              <th className="border-b border-r border-[#a0a0a0] p-0"><svg viewBox="0 0 12 12" className="ml-auto mr-1 size-3"><path d="M12 0v12H0z" fill="#b4b4b4" /></svg></th>
              <th className="border-b border-r border-[#a0a0a0] p-0 font-normal">A</th>
              {cols.map((c) => <th key={c} className={"p-0 font-normal border-r " + (c === "C" ? "border-b-2 border-b-[#1b6a45] border-r-[#a0a0a0] bg-[#d0d0d0] text-[#1b6a45]" : "border-b border-[#a0a0a0]")}>{c}</th>)}
            </tr>
          </thead>
          <tbody>
            {sheet.map(([n, cls, text, edge]) => (
              <tr key={n} className="h-5">
                <th className="border-b border-r border-[#a8a8a8] bg-[#e6e6e6] p-0 text-[16px] font-normal text-[#333]">{n}</th>
                <td className={"overflow-hidden whitespace-pre border-r p-0 " + cls + (edge ? " border-r-black" : " border-r-[#d4d4d4]")}>{text}</td>
                {cols.map((c) => <td key={c} className="border-b border-r border-[#d4d4d4] bg-white p-0" />)}
              </tr>
            ))}
          </tbody>
        </table>
      </div>
      <div className="ml-1 mt-0.5 flex w-[15px] flex-col bg-[#dadada]">
        <button aria-label="Scroll up" className="flex h-[15px] items-center justify-center border border-[#aaa] bg-white text-[#555]"><Caret className="rotate-180 w-1.5" /></button>
        <span className="mt-[173px] h-[123px] border border-[#aaa] bg-white" />
        <button aria-label="Scroll down" className="mt-auto flex h-[15px] items-center justify-center border border-[#aaa] bg-white text-[#555]"><Caret className="w-1.5" /></button>
      </div>
    </div>
  );
}

function ExcelBottom() {
  return (
    <>
      <div className="flex h-7 items-start border-b border-[#c8c8c8] bg-[#e6e6e6] text-[12px] text-[#444]">
        <div className="flex h-full w-[100px] items-center gap-6 pl-[26px] text-[#b0b0b0]">
          <Caret className="w-1.5 rotate-90" /><Caret className="w-1.5 -rotate-90" />
        </div>
        <button className="h-[25px] w-[65px] border-b-2 border-x border-x-[#aaa] border-b-[#1b6a45] bg-white pt-1 font-bold leading-4 text-[#1b6a45]">Sheet1</button>
        <button className="mt-1 h-5 w-[65px] border-r border-[#999]">Sheet2</button>
        <button className="mt-1 h-5 w-[65px] border-r border-[#999]">Sheet3</button>
        <button aria-label="New sheet" className="ml-[33px] mt-1.5"><svg viewBox="0 0 16 16" className="size-4" fill="none" stroke="#b8b8b8"><circle cx="8" cy="8" r="7.500" /><path d="M4.500 8h7M8 4.500v7" strokeWidth="1.500" /></svg></button>
        <span className="ml-auto mr-[15px] mt-2 h-3 border-l-2 border-dotted border-[#aaa]" />
        <div className="mr-[19px] mt-[7px] flex h-[15px] w-[418px] bg-[#dadada]">
          <button aria-label="Scroll left" className="flex w-[15px] items-center justify-center border border-[#aaa] bg-white text-[#555]"><Caret className="w-1.5 rotate-90" /></button>
          <span className="w-[17px] border border-[#aaa] bg-white" />
          <button aria-label="Scroll right" className="ml-auto flex w-[15px] items-center justify-center border border-[#aaa] bg-white text-[#555]"><Caret className="w-1.5 -rotate-90" /></button>
        </div>
      </div>
      <div className="flex h-[22px] items-center bg-[#f3f3f3] pl-2 text-[11px] leading-4 text-[#333]">
        <span className="mr-auto">Ready</span>
        <button aria-label="Normal view" className="flex h-full w-[38px] items-center justify-center bg-[#c6c6c6]"><svg viewBox="0 0 13 13" className="size-[13px]" fill="none" stroke="#555"><path d="M.5.5h12v12H.5zM.5 4.500h12M.5 8.500h12M4.500.5v12M8.500.5v12" /></svg></button>
        <button aria-label="Page layout" className="flex w-[38px] justify-center"><svg viewBox="0 0 13 13" className="size-[13px]" fill="none" stroke="#555"><path d="M.5.5h12v12H.5zM3.500 2.500h6v8h-6zM5 5h3M5 7h3M5 9h3" /></svg></button>
        <button aria-label="Page break preview" className="flex w-[38px] justify-center"><svg viewBox="0 0 13 13" className="size-[13px]" fill="none" stroke="#555"><path d="M.5.5h12v12H.5zM4.500.5v7h4v-7M8.500 7.500h4" /></svg></button>
        <button aria-label="Zoom out" className="flex w-4 justify-center"><Minus className="size-2.5 text-[#555]" strokeWidth={5} /></button>
        <input type="range" aria-label="Zoom" defaultValue="50" className="h-3.5 w-[98px] appearance-none bg-[linear-gradient(#b4b4b4,#b4b4b4)] bg-[length:100%_1px] bg-center bg-no-repeat [&::-webkit-slider-thumb]:h-[11px] [&::-webkit-slider-thumb]:w-[5px] [&::-webkit-slider-thumb]:appearance-none [&::-webkit-slider-thumb]:bg-[#666]" />
        <button aria-label="Zoom in" className="w-4 text-[15px] font-bold leading-4 text-[#555]">+</button>
        <span className="ml-2 w-[46px]">100%</span>
      </div>
    </>
  );
}

function ExcelWindow() {
  return (
    <section className="absolute left-14 top-[150px] flex h-[877px] w-[1136px] flex-col border-x border-b border-[#1b6a45] bg-[#e6e6e6] shadow-[0_0_14px_rgba(0,0,0,.6)]">
      <ExcelTop />
      <Ribbon />
      <div className="flex h-[47px] items-start bg-[#e6e6e6] pl-[5px] pt-[11px]">
        <span className="relative flex items-center">
          <input aria-label="Name box" defaultValue="C42" className="h-[26px] w-[102px] border border-[#c2c2c2] bg-white pl-1.5 text-[12px] text-[#333]" />
          <Caret className="absolute right-1.5 text-[#666]" />
        </span>
        <span className="ml-3.5 mt-2 h-3 border-l-2 border-dotted border-[#aaa]" />
        <div className="ml-3.5 flex h-[26px] w-[110px] items-center border border-[#c2c2c2] bg-white text-[#c0c0c0]">
          <button aria-label="Cancel" className="flex w-9 justify-center"><X className="size-4" /></button>
          <button aria-label="Enter" className="flex w-9 justify-center"><Check className="size-4" /></button>
          <button aria-label="Insert function" className="w-9 font-['Liberation_Serif',serif] text-[16px] italic leading-5 text-[#444]">f<span className="text-[12px]">x</span></button>
        </div>
        <span className="relative ml-[3px] mr-[5px] flex flex-1 items-center">
          <input aria-label="Formula bar" className="h-[26px] w-full border border-[#c2c2c2] bg-white px-1" />
          <Caret className="absolute right-1.5 text-[#666]" />
        </span>
      </div>
      <Sheet />
      <ExcelBottom />
      <svg viewBox="0 0 14 16" className="absolute left-[82px] top-[693px] h-4 w-3.5"><path d="M5 1h4v4h4v5H9v5H5v-5H1V5h4z" fill="#fff" stroke="#000" strokeWidth="1.200" /></svg>
    </section>
  );
}

/* ---------- desktop icons ---------- */

const Flower = ({ petal, core, className }) => (
  <svg viewBox="-24 -24 48 48" className={className}>
    {[0, 60, 120, 180, 240, 300].map((a) => <circle key={a} cx="0" cy="-14" r="9.500" fill={core} transform={`rotate(${a})`} />)}
    <circle r="13" fill={core} />
    {[0, 60, 120, 180, 240, 300].map((a) => <path key={a} d="M0-4C-7-11-5-18 0-18S7-11 0-4z" fill="none" stroke={petal} strokeWidth="3.500" transform={`rotate(${a})`} />)}
  </svg>
);

function ZipFolder() {
  return (
    <svg viewBox="0 0 40 44" className="h-11 w-10">
      <path d="M0 0h36v28l4-2v16H0z" fill="#f6d774" /><path d="M0 0h4v43H0z" fill="#fbe79c" />
      <path d="M21 0v43" stroke="#8d8670" strokeWidth="4" strokeDasharray="2 1.500" />
      <rect x="18" y="1" width="7" height="15" rx="2" fill="#d4d4d4" stroke="#777" />
    </svg>
  );
}

function DesktopIcons() {
  return (
    <div className="absolute left-0 top-[664px] flex w-[100px] flex-col text-[11px] leading-4 text-white">
      <span className="pl-1">GhosTicks</span>
      <a href="#gotomeeting" className="relative mt-[31px] flex h-[72px] flex-col whitespace-nowrap pl-0.5">
        <Flower petal="#fff" core="#e0852c" className="ml-2 size-[54px]" />
        <svg viewBox="0 0 12 12" className="absolute left-3.5 top-10 size-3"><path d="M0 0h12v12H0z" fill="#eee" /><path d="M3 10c0-4 2-5 5-5M5.500 2.500L9 5 6 8" fill="none" stroke="#2a62b0" strokeWidth="2" /></svg>
        GoToMeeting
      </a>
      <a href="#navigator-1" className="mt-[34px] flex flex-col whitespace-nowrap pl-3"><span className="pb-1 pl-2.5"><ZipFolder /></span>Navigator</a>
      <a href="#navigator-2" className="mt-[37px] flex flex-col whitespace-nowrap pl-2"><span className="pb-1 pl-3.5"><ZipFolder /></span>Navigator</a>
    </div>
  );
}

/* ---------- taskbar ---------- */

function TaskButton({ label, running, active, children }) {
  return (
    <button aria-label={label} className={"relative flex h-full w-[49px] items-center justify-center " + (active ? "bg-[#4a4e52]" : "")}>
      {children}
      {running && <span className={"absolute bottom-0 h-0.5 bg-[#76b9ed] " + (active ? "w-full" : "w-10")} />}
    </button>
  );
}

function Taskbar() {
  return (
    <footer className="flex h-10 shrink-0 items-center bg-[#1f2226] text-white">
      <button aria-label="Start" className="flex h-full w-12 items-center justify-center bg-[#101418]">
        <svg viewBox="0 0 16 16" className="size-4" fill="#fff"><path d="M0 2.300l6.500-.9v6.200H0zM7.300 1.300L16 0v7.600H7.300zM0 8.400h6.500v6.200L0 13.700zM7.300 8.400H16V16l-8.700-1.300z" /></svg>
      </button>
      <label className="flex h-full w-[344px] items-center bg-[#f2f2f2] pl-2.5 pr-3">
        <span className="mr-2.5 size-5 rounded-full border-[3px] border-[#111]" />
        <input aria-label="Search" placeholder="Type here to search" className="min-w-0 flex-1 bg-transparent text-[15px] outline-none placeholder:text-[#444]" />
        <Mic className="size-[17px] text-[#333]" strokeWidth={1.500} />
      </label>
      <TaskButton label="Task view"><svg viewBox="0 0 18 16" className="h-4 w-[18px]" fill="none" stroke="#fff" strokeWidth="1.200"><path d="M1 0v2.500h10V0M1 16v-2.500h10V16M1 5h10v6H1zM15 0v3M15 10v6" /><rect x="14" y="5" width="2" height="3" fill="#fff" /></svg></TaskButton>
      <TaskButton label="Edge"><svg viewBox="0 0 24 24" className="size-6"><path d="M2 11C3 4 7 1 12 1c7 0 11 5 10 13H8c0 4 3 5.500 7 5.500 2 0 4-.5 6-1.500v4.500C19 23.500 17 24 14 24 8 24 4 20 4 15c0-4 2-7 6-9-2 1.500-2.500 3-2.500 4.500H16C16 7.500 15 6 12 6 8 6 4 8 2 11z" fill="#0a78d6" /></svg></TaskButton>
      <TaskButton label="File Explorer"><svg viewBox="0 0 22 20" className="h-5 w-[22px]"><path d="M0 1h9l2 2h11v16H0z" fill="#f6d774" /><path d="M0 6h22v13H0z" fill="#fbe596" /><path d="M4 12h14v8h-4v-4H8v4H4z" fill="#3a9ed4" /></svg></TaskButton>
      <TaskButton label="Store"><svg viewBox="0 0 22 26" className="h-[26px] w-[22px]"><path d="M6 8V5a5 5 0 0 1 10 0v3" fill="none" stroke="#fff" strokeWidth="1.300" /><path d="M0 7h22v18H0z" fill="#fff" /><path d="M6 11h4.500v4.500H6z" fill="#e25022" /><path d="M12 11h4.500v4.500H12z" fill="#7cb520" /><path d="M6 17h4.500v4.500H6z" fill="#1a9fe6" /><path d="M12 17h4.500v4.500H12z" fill="#fab80c" /></svg></TaskButton>
      <TaskButton label="Snipping Tool"><svg viewBox="0 0 24 24" className="size-6"><ellipse cx="12" cy="9" rx="11" ry="7" fill="#f3e0e2" stroke="#d06a70" transform="rotate(-20 12 9)" /><path d="M10 11l9 8M21 10l-8 11" stroke="#ccd" strokeWidth="1.500" /><circle cx="13" cy="20" r="2.500" fill="none" stroke="#3070c8" strokeWidth="2" /><circle cx="20" cy="19" r="2.500" fill="none" stroke="#3070c8" strokeWidth="2" /></svg></TaskButton>
      <TaskButton label="Mail">
        <svg viewBox="0 0 24 22" className="h-[22px] w-6"><path d="M0 8l12-8 12 8v14H0z" fill="#fff" /><path d="M1 9l11-5 11 5-14 4z" fill="#1f2226" /></svg>
        <span className="absolute left-7 top-[17px] flex size-5 items-center justify-center rounded-full border border-[#aaa] bg-[#333] text-[11px] font-bold">56</span>
      </TaskButton>
      <TaskButton label="Chrome" running><svg viewBox="-12 -12 24 24" className="size-[23px]"><circle r="11.500" fill="#fbc116" /><path d="M-10-5.800A11.500 11.500 0 0 1 10-5.800L0-5.500-5 3z" fill="#e2412f" /><path d="M-10-5.800A11.500 11.500 0 0 0 0 11.500L5 3-5 3z" fill="#2ba24c" /><circle r="5.500" fill="#fff" /><circle r="4.300" fill="#4688f0" /></svg></TaskButton>
      <TaskButton label="NinjaTrader" running><svg viewBox="0 0 22 16" className="h-4 w-[22px]" fill="none" strokeWidth="2.500"><path d="M7 13C0 15 0 5 8 3l4 10" stroke="#6a6260" /><path d="M10 3l5 10c3-3 5-7 3-11" stroke="#b02c22" /></svg></TaskButton>
      <TaskButton label="Notepad" running><svg viewBox="0 0 22 24" className="h-6 w-[22px]"><path d="M6 1l14 2-3 19L1 19z" fill="#7cc0d4" stroke="#cfe6ee" /><path d="M6 1l14 2-1 6-15-1z" fill="#c5e8ef" /><path d="M20 3l1 18-4 1z" fill="#eee" /></svg></TaskButton>
      <TaskButton label="PowerPoint" running><svg viewBox="0 0 24 24" className="size-6"><path d="M13 3h10v18H13z" fill="#fff" stroke="#d24625" /><circle cx="17" cy="9" r="3" fill="#d24625" /><path d="M15 14h6M15 17h6" stroke="#d24625" strokeWidth="1.500" /><path d="M0 3l14-3v24L0 21z" fill="#d24625" /><text x="3" y="17" fontSize="14" fontWeight="700" fill="#fff">P</text></svg></TaskButton>
      <TaskButton label="GoToWebinar" running><Flower petal="#2a7fd0" core="#d8eefc" className="size-7" /></TaskButton>
      <TaskButton label="Excel" running active><svg viewBox="0 0 24 24" className="size-6"><path d="M13 3h10v18H13z" fill="#fff" stroke="#1f7044" /><path d="M14 7h8M14 10h8M14 13h8M14 16h8M18 4v16" stroke="#1f7044" /><path d="M0 3l14-3v24L0 21z" fill="#1f7044" /><text x="3" y="17" fontSize="13" fontWeight="700" fill="#fff">X</text></svg></TaskButton>

      <div className="ml-auto flex h-full items-center">
        <button aria-label="People" className="w-[34px]"><svg viewBox="0 0 16 16" className="size-4" fill="none" stroke="#fff" strokeWidth="1.200"><circle cx="11" cy="3" r="2.500" /><circle cx="4.500" cy="8" r="2.500" /><path d="M.5 15.500c0-3 1.500-4.500 4-4.500s4 1.500 4 4.500M8 7.500c1-1 2-1.500 3-1.500 2.500 0 4 2 4 5" /></svg></button>
        <button aria-label="Show hidden icons" className="w-[25px]"><ChevronUp className="size-4" /></button>
        <button aria-label="Dropbox" className="w-[23px]"><SiDropbox className="size-3.5" /></button>
        <button aria-label="Network" className="w-[25px]"><svg viewBox="0 0 16 14" className="h-3.5 w-4" fill="none" stroke="#fff"><path d="M3.500 2.500h12v8h-12zM9.500 10.500v3M6 13.500h7" /><path d="M.5.5h4v4h-4zM2.500 4.500v6" fill="#1f2226" /></svg></button>
        <button aria-label="Volume" className="w-[24px]"><svg viewBox="0 0 16 14" className="h-3.5 w-4" fill="none" stroke="#fff"><path d="M.5 4.500h3l3-3v11l-3-3h-3zM9 5c1 1 1 3 0 4M11 3c2 2 2 6 0 8" /><path d="M13 1.500c3 3 3 8 0 11" stroke="#888" /></svg></button>
        <div className="w-[62px] whitespace-nowrap text-center text-[11px] leading-[18px]"><p>11:17 AM</p><p>11/26/2018</p></div>
        <button aria-label="Notifications" className="relative ml-3 h-10 w-9">
          <svg viewBox="0 0 16 16" className="size-4"><path d="M0 0h16v12H8l-4 4v-4H0z" fill="#fff" /><path d="M3 3.500h10M3 6h10M3 8.500h7" stroke="#1f2226" /></svg>
          <span className="absolute left-2 top-5 flex size-4 items-center justify-center rounded-full border border-[#999] bg-[#333] text-[11px] font-bold">3</span>
        </button>
        <span className="h-full w-[5px] border-l border-[#777]" />
      </div>
    </footer>
  );
}

export default function App() {
  return (
    <div className="flex h-screen w-full flex-col overflow-hidden bg-[#001330] font-['Open_Sans','Noto_Sans',sans-serif]">
      <main className="relative min-h-0 flex-1 overflow-hidden bg-gradient-to-r from-[#00122c] via-[#011a3c] to-[#003a74] [&_svg]:font-['Liberation_Sans',sans-serif]">
        <div className="absolute right-0 top-0 h-[200px] w-[200px] bg-[#00142f]" />
        <DesktopIcons />
        <ControlCenter />
        <HalfHourWindow />
        <DailyWindow />
        <FourHourWindow />
        <ExcelWindow />
      </main>
      <Taskbar />
    </div>
  );
}
